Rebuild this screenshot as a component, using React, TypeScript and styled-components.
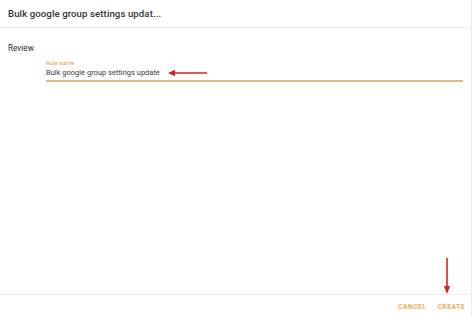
import { createGlobalStyle, styled } from 'styled-components'

const GlobalStyle = createGlobalStyle`
	html, body, #root {
		margin: 0;
		padding: 0;
		height: 100%;
	}
	body {
		background: #ffffff;
		font-family: Roboto, 'Liberation Sans', sans-serif;
		color: #212121;
	}
`

const App = () => {
	return (
		<>
			<GlobalStyle />
			<Dialog>
				<Header>
					<Title>Bulk google group settings updat...</Title>
				</Header>
				<Body>
					<SectionTitle>Review</SectionTitle>
					<Field>
						<FieldLabel>Rule name</FieldLabel>
						<FieldValue>
							Bulk google group settings update
							<ArrowLeft width={40} height={8} viewBox="0 0 40 8">
								<path d="M6 4 H39" stroke="#d32222" strokeWidth={1.6} />
								<path d="M0 4 L7 0.8 L7 7.2 Z" fill="#d32222" />
							</ArrowLeft>
						</FieldValue>
					</Field>
				</Body>
				<Footer>
					<FooterButton>Cancel</FooterButton>
					<FooterButton>
						Create
						<ArrowDown width={8} height={36} viewBox="0 0 8 36">
							<path d="M4 0 V29" stroke="#d32222" strokeWidth={1.6} />
							<path d="M4 36 L0.8 28 L7.2 28 Z" fill="#d32222" />
						</ArrowDown>
					</FooterButton>
				</Footer>
			</Dialog>
		</>
	)
}

const Dialog = styled.div`
	display: flex;
	flex-direction: column;
	width: 472px;
	height: 317px;
	border-right: 1px solid #ececec;
	box-sizing: border-box;
`
const Header = styled.header`
	flex: 0 0 auto;
	height: 27px;
	display: flex;
	align-items: center;
	padding: 0 8px;
	border-bottom: 1px solid #ededed;
`
const Title = styled.h1`
	margin: 0;
	font-size: 9.6px;
	font-weight: 500;
	color: #333333;
	letter-spacing: 0.1px;
`
const Body = styled.main`
	flex: 1 1 auto;
	padding: 14px 8px 0 8px;
`
const SectionTitle = styled.div`
	font-size: 8.2px;
	font-weight: 400;
	color: #2a2a2a;
	line-height: 12px;
`
const Field = styled.div`
	margin: 5px 0 0 38px;
	border-bottom: 2px solid #dfba85;
	padding-bottom: 2px;
`
const FieldLabel = styled.div`
	font-size: 6px;
	color: #e2a247;
	line-height: 8px;
`
const FieldValue = styled.div`
	position: relative;
	font-size: 7.5px;
	color: #3a3a3a;
	line-height: 11px;
`
const ArrowLeft = styled.svg`
	position: absolute;
	left: 122px;
	top: 1.5px;
`
const Footer = styled.footer`
	flex: 0 0 auto;
	height: 20px;
	display: flex;
	align-items: center;
	justify-content: flex-end;
	gap: 11px;
	padding: 2px 6px 0 0;
	border-top: 1px solid #ededed;
`
const FooterButton = styled.button`
	position: relative;
	border: none;
	background: none;
	padding: 0;
	font-family: Roboto, 'Liberation Sans', sans-serif;
	font-size: 6.8px;
	font-weight: 700;
	letter-spacing: 0.45px;
	text-transform: uppercase;
	color: #e6ad63;
`
const ArrowDown = styled.svg`
	position: absolute;
	left: 6px;
	top: -45px;
`

export default App
